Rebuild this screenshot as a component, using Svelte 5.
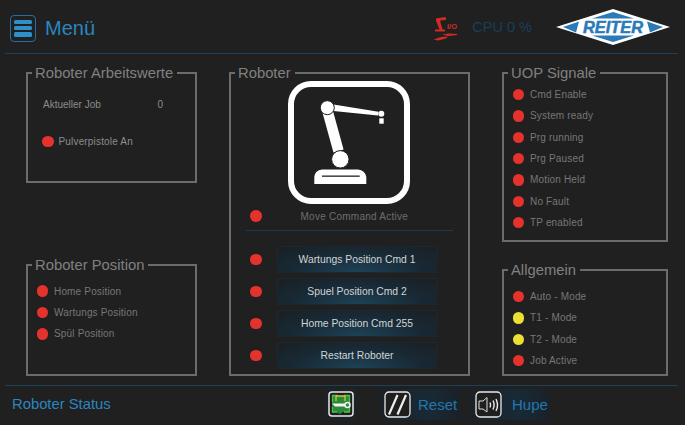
<script>
  const colors = { r: '#e5322d', y: '#ece035' };
  const position = ['Home Position', 'Wartungs Position', 'Spül Position'];
  const commands = ['Wartungs Position Cmd 1', 'Spuel Position Cmd 2', 'Home Position Cmd 255', 'Restart Roboter'];
  const uop = ['Cmd Enable', 'System ready', 'Prg running', 'Prg Paused', 'Motion Held', 'No Fault', 'TP enabled'];
  const general = [['Auto - Mode', 'r'], ['T1 - Mode', 'y'], ['T2 - Mode', 'y'], ['Job Active', 'r']];
</script>

<div class="screen">
  <header class="top">
    <div class="menu">
      <button class="burger" aria-label="Menü"><span></span><span></span><span></span></button>
      <span class="menu-label">Menü</span>
    </div>
    <div class="top-right">
      <svg class="io" viewBox="0 0 26 26" width="26" height="26" aria-hidden="true">
        <path d="M3 3.500 L12 2 L13 3 V5 L7 5.500 L9.500 14.500 H12 V16.500 H2 V14.500 H6.500 L3 5.500 Z" fill="#d42a24"/>
        <path d="M9 19.500 L16 18.500 L24 19 L24.500 20 L15 21 Z M0.500 24.500 L8 22 L15 21.500 L13 23.500 L5 25.500 Z" fill="#d42a24"/>
        <text x="14" y="14" class="io-text">I/O</text>
      </svg>
      <span class="cpu">CPU 0 %</span>
      <svg class="logo" viewBox="0 0 114 36" width="114" height="36" aria-hidden="true">
        <path d="M0 18 L57 0 L114 18 L57 36 Z" fill="#fff"/>
        <path d="M57 3 L78 9.500 L36 9.500 Z M57 33 L78 26.500 L36 26.500 Z M7 18 L23 12.500 L20 23.500 Z M107 18 L91 12.500 L94 23.500 Z" fill="#2a7ab8"/>
        <text x="57" y="23.500" class="logo-text" text-anchor="middle" textLength="60" lengthAdjust="spacingAndGlyphs">REITER</text>
      </svg>
    </div>
  </header>

  <main class="body">
    <div class="col left">
      <fieldset class="box work">
        <legend>Roboter Arbeitswerte</legend>
        <div class="job"><span>Aktueller Job</span><span>0</span></div>
        <div class="led-row gun"><i class="led"></i><span>Pulverpistole An</span></div>
      </fieldset>
      <fieldset class="box pos">
        <legend>Roboter Position</legend>
        <div class="list">
          {#each position as p}
            <div class="led-row"><i class="led"></i><span>{p}</span></div>
          {/each}
        </div>
      </fieldset>
    </div>

    <fieldset class="box robot">
      <legend>Roboter</legend>
      <div class="robot-tile">
        <svg viewBox="0 0 122 123" width="122" height="123" aria-hidden="true">
          <rect x="3" y="3" width="116" height="117" rx="20" fill="none" stroke="#fff" stroke-width="6"/>
          <path d="M39.500 30 L50.500 70" stroke="#fff" stroke-width="10.500" fill="none"/>
          <path d="M45.500 23.500 L90.500 30.800 L90 34.500 L45.500 30 Z" fill="#fff"/>
          <circle cx="39.300" cy="26.700" r="7" fill="#fff" stroke="#202020" stroke-width="1"/>
          <circle cx="52.300" cy="78.300" r="8.700" fill="#fff" stroke="#202020" stroke-width="1"/>
          <circle cx="93.300" cy="32.700" r="3" fill="#fff"/>
          <rect x="91.300" y="37.300" width="4.400" height="5.400" fill="#fff"/>
          <path d="M26.300 103 L26.300 96 Q27 89 34 88.500 L70 88.500 Q77 89 78.300 96 L78.300 103 Z" fill="#fff"/>
          <rect x="34" y="94.500" width="37.700" height="1.300" fill="#222"/>
        </svg>
      </div>
      <div class="active"><i class="led"></i><span>Move Command Active</span></div>
      <div class="sep"></div>
      <div class="cmds">
        {#each commands as c}
          <div class="cmd-row"><i class="led"></i><button class="cmd">{c}</button></div>
        {/each}
      </div>
    </fieldset>

    <div class="col right">
      <fieldset class="box uop">
        <legend>UOP Signale</legend>
        <div class="list">
          {#each uop as u}
            <div class="led-row"><i class="led"></i><span>{u}</span></div>
          {/each}
        </div>
      </fieldset>
      <fieldset class="box gen">
        <legend>Allgemein</legend>
        <div class="list">
          {#each general as [label, c]}
            <div class="led-row"><i class="led" style:background={colors[c]}></i><span>{label}</span></div>
          {/each}
        </div>
      </fieldset>
    </div>
  </main>

  <footer class="bottom">
    <span class="status">Roboter Status</span>
    <div class="actions">
      <div class="tile key">
        <svg viewBox="0 0 26 26" width="26" height="26" aria-hidden="true">
          <rect x="1" y="1" width="24" height="24" rx="3" fill="#1f1f1f" stroke="#e8e8e8" stroke-width="1.500"/>
          <path d="M4 5 H22 V21 H15 L12 23 L8 21 H4 Z" fill="#2a8a35"/>
          <path d="M4.500 11 V4.500 H10 M16 4.500 H21.500 V21 H16 M4.500 16 V21 H9" stroke="#49c24f" fill="none" stroke-width="1.300"/>
          <path d="M8 5 V10 M8 5 H17 V10" stroke="#d4c63a" fill="none" stroke-width="1.300"/>
          <path d="M4 12.500 H17 V15.500 H7 Z" fill="#f2f2f2"/>
          <circle cx="19.500" cy="14" r="2.500" fill="none" stroke="#f2f2f2" stroke-width="1.500"/>
        </svg>
      </div>
      <button class="act reset">
        <svg viewBox="0 0 27 27" width="27" height="27" aria-hidden="true">
          <rect x="1" y="1" width="25" height="25" rx="4" fill="#1f1f1f" stroke="#e8e8e8" stroke-width="1.300"/>
          <path d="M5 23.500 L13.500 4 M13.500 23.500 L22 4" stroke="#eee" stroke-width="2.200"/>
        </svg>
        <span>Reset</span>
      </button>
      <button class="act hupe">
        <svg viewBox="0 0 27 27" width="27" height="27" aria-hidden="true">
          <rect x="1" y="1" width="25" height="25" rx="4" fill="#1f1f1f" stroke="#e8e8e8" stroke-width="1.300"/>
          <path d="M4 10 H8 L12 6.500 V21 L8 18 H4 Z" fill="none" stroke="#ddd" stroke-width="1"/>
          <path d="M15 11.500 Q16.200 14 15 16.500 M18 9.500 Q20.200 14 18 18.500 M21 8 Q24 14 21 20" fill="none" stroke="#eee" stroke-width="1.400"/>
        </svg>
        <span>Hupe</span>
      </button>
    </div>
  </footer>
</div>

<style>
  :global(body) { margin: 0; background: #202020; }
  .screen {
    width: 685px; height: 425px; background: #202020; overflow: hidden;
    display: flex; flex-direction: column;
    font-family: "Liberation Sans", Arial, sans-serif;
  }
  .top {
    height: 54px; box-sizing: border-box; margin: 0 7px 0 5px;
    padding: 3px 0 0 5px; flex: none;
    display: flex; align-items: center; justify-content: space-between;
    border-bottom: 1px solid #1c4058;
  }
  .menu { display: flex; align-items: center; gap: 9px; }
  .burger {
    width: 26px; height: 27px; padding: 4px 3px; box-sizing: border-box;
    background: none; border: 1px solid #246f9f; border-radius: 4px;
    display: flex; flex-direction: column; justify-content: space-between;
  }
  .burger span { height: 4.500px; background: #2e8fcb; border-radius: 1.500px; }
  .menu-label { color: #2b86bf; font-size: 20px; }
  .top-right { display: flex; align-items: center; margin: -3px 8px 0 0; }
  .io { margin-right: 13px; margin-top: 3px; }
  .io-text { fill: #d42a24; font-size: 7.500px; font-weight: 700; font-family: "Liberation Sans", sans-serif; }
  .cpu { color: #183f5a; font-size: 14.500px; margin-right: 24px; }
  .logo-text { fill: #2a7ab8; stroke: #2a7ab8; stroke-width: .5px; font-size: 16px; font-weight: 700; font-style: italic; font-family: "Liberation Sans", sans-serif; }

  .body {
    display: grid; grid-template-columns: 171px 241px 166px;
    column-gap: 32px; padding: 9px 0 0 26px; align-items: start; box-sizing: border-box;
  }
  .col { display: flex; flex-direction: column; justify-content: space-between; height: 313px; }
  .box {
    margin: 0; min-width: 0; box-sizing: border-box;
    border: 2px solid #6c6c6c; padding: 0;
  }
  legend { color: #808080; font-size: 14.800px; line-height: 20px; padding: 0 4px 0 3px; margin-left: 4px; }
  .work { height: 120px; }
  .pos { height: 121px; }
  .job {
    display: flex; width: 120px; justify-content: space-between;
    padding: 16px 0 0 15px; font-size: 10px; color: #8c8c8c;
  }
  .led { display: block; width: 11.500px; height: 11.500px; border-radius: 50%; background: #e5322d; flex: none; }
  .led-row { display: flex; align-items: center; gap: 6px; height: 21.330px; font-size: 10px; color: #777; letter-spacing: .17px; }
  .gun { margin: 21px 0 0 14px; color: #8c8c8c; gap: 5px; }
  .list { padding: 6px 0 0 8.500px; }
  .pos .list { padding-top: 5.500px; }
  .uop .list { padding-top: 1px; }
  .uop { height: 179px; }
  .gen { height: 116px; }
  .robot { height: 313px; }
  .robot-tile { display: flex; justify-content: center; margin: -2px 2px 0 0; }
  .active { display: flex; align-items: center; padding: 5px 0 0 19px; font-size: 10px; color: #6e6e6e; height: 14px; }
  .active span { margin-left: 39px; letter-spacing: .25px; }
  .sep { height: 1px; margin: 7px 15px 0 15px; background: #1f3a4e; }
  .cmds { display: flex; flex-direction: column; gap: 5px; margin-top: 15px; padding-left: 19px; }
  .cmd-row { display: flex; align-items: center; gap: 15.500px; }
  .cmd {
    width: 160px; height: 27px; padding: 0; border: 1px solid #1c2830;
    background: radial-gradient(ellipse at 50% 100%, #1d4257 0%, #182a36 55%, #1a1f23 100%);
    color: #d4d4d4; font: 10.350px "Liberation Sans", sans-serif;
  }
  .bottom {
    margin: auto 7px 0 5px; height: 40px; box-sizing: border-box; border-top: 1px solid #1c4058;
    display: flex; align-items: center; padding: 0 0 3px 7px; flex: none;
  }
  .status { color: #2b86bf; font-size: 14.800px; width: 313px; }
  .actions { display: flex; align-items: center; }
  .tile {
    width: 32px; height: 32px; margin-right: 23px; display: flex; align-items: center; justify-content: center;
    background: #1d2227;
  }
  .tile svg, .act svg { display: block; flex: none; }
  .act {
    display: flex; align-items: center; height: 31px; padding: 0 0 0 4px; margin: 0; box-sizing: border-box;
    background: linear-gradient(90deg, #1b2025, #182a37 60%, #1a2128); border: 0;
    color: #2477ad; font: 15px "Liberation Sans", sans-serif;
  }
  .reset { width: 80px; gap: 7px; margin-right: 10px; }
  .hupe { width: 80px; gap: 10px; padding-left: 5px; }
</style>
